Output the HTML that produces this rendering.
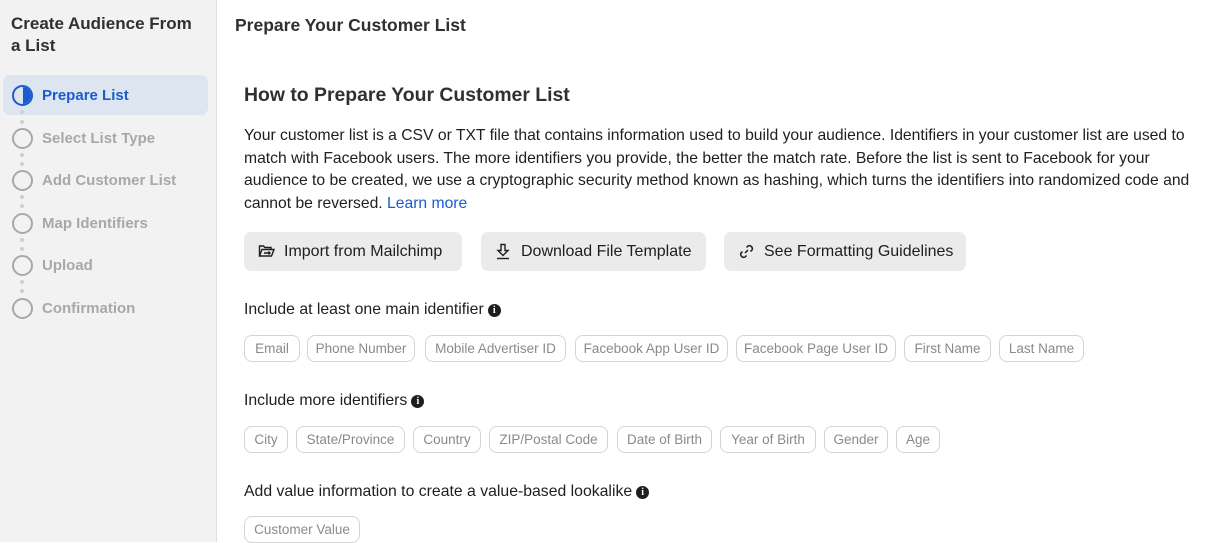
<!DOCTYPE html><html><head><style>
body{margin:0;width:1221px;height:542px;overflow:hidden;font-family:"Liberation Sans",Arial,sans-serif;background:#fff;color:#1c1e21;position:relative}
.sb{position:absolute;left:0;top:0;width:216px;height:542px;background:#f2f2f2;border-right:1px solid #e0e0e0}
.sb h1{position:absolute;left:11px;top:13px;margin:0;font-size:17px;line-height:22px;font-weight:bold;color:#303030;width:185px}
.act{position:absolute;left:3px;top:75px;width:205px;height:40px;background:#dde5f0;border-radius:7px}
.step{position:absolute;left:42px;font-size:15px;font-weight:bold;color:#a8a8a8}
.circ{position:absolute;left:12px;width:21px;height:21px;border:2px solid #a8a8a8;border-radius:50%;box-sizing:border-box}
.dot{position:absolute;left:20px;width:4px;height:4px;border-radius:50%;background:#d0d0d0}
.t{position:absolute;white-space:nowrap}
.btn{position:absolute;top:232px;height:39px;background:#ebebeb;border-radius:7px;font-size:16px;line-height:39px;color:#1c1e21;box-sizing:border-box;padding-left:40px}
.btn svg{position:absolute;left:14px;top:11px}
.chip{position:absolute;height:27px;border:1px solid #d4d4d4;border-radius:8px;font-size:13.5px;line-height:25px;color:#8a8a8a;box-sizing:border-box;text-align:center}
.i{display:inline-block;width:13px;height:13px;border-radius:50%;background:#1c1e21;color:#fff;font-size:10px;line-height:13px;text-align:center;font-weight:bold;font-family:"Liberation Serif",serif;vertical-align:1px;margin-left:4px}
</style></head><body>
<div class="sb">
<h1>Create Audience From a List</h1>
<div class="act"></div>
<div style="position:absolute;left:12px;top:85px;width:21px;height:21px;border:2px solid #1a5ccf;border-radius:50%;box-sizing:border-box;overflow:hidden"><div style="position:absolute;left:8.5px;top:0;width:10px;height:17px;background:#1a5ccf"></div></div>
<div class="step" style="top:87px;color:#1a5ccf">Prepare List</div>
<div class="dot" style="top:110px"></div><div class="dot" style="top:120px"></div>
<div class="circ" style="top:128px"></div><div class="step" style="top:130px">Select List Type</div>
<div class="dot" style="top:153px"></div><div class="dot" style="top:162px"></div>
<div class="circ" style="top:170px"></div><div class="step" style="top:172px">Add Customer List</div>
<div class="dot" style="top:195px"></div><div class="dot" style="top:204px"></div>
<div class="circ" style="top:213px"></div><div class="step" style="top:215px">Map Identifiers</div>
<div class="dot" style="top:238px"></div><div class="dot" style="top:247px"></div>
<div class="circ" style="top:255px"></div><div class="step" style="top:257px">Upload</div>
<div class="dot" style="top:280px"></div><div class="dot" style="top:289px"></div>
<div class="circ" style="top:298px"></div><div class="step" style="top:300px">Confirmation</div>
</div>
<div class="t" style="left:235px;top:15px;font-size:17.5px;font-weight:bold;color:#303030">Prepare Your Customer List</div>
<div class="t" style="left:244px;top:84px;font-size:19.4px;font-weight:bold;color:#303030">How to Prepare Your Customer List</div>
<div style="position:absolute;left:244px;top:125px;white-space:nowrap;font-size:15.7px;line-height:22.5px;color:#1c1e21">Your customer list is a CSV or TXT file that contains information used to build your audience. Identifiers in your customer list are used to<br>match with Facebook users. The more identifiers you provide, the better the match rate. Before the list is sent to Facebook for your<br>audience to be created, we use a cryptographic security method known as hashing, which turns the identifiers into randomized code and<br>cannot be reversed. <span style="color:#1a5ccf">Learn more</span></div>
<div class="btn" style="left:244px;width:218px"><svg width="17" height="16" viewBox="0 0 17 16" fill="none" stroke="#1c1e21" stroke-width="1.4"><path d="M1.5 13V3h4l1.5 1.5h6v2"/><path d="M1.5 13l2.5-6.5h12l-2.5 6.5z"/><path d="M6 10h6m-1.5-1.5L12 10l-1.5 1.5"/></svg>Import from Mailchimp</div>
<div class="btn" style="left:481px;width:225px"><svg width="16" height="17" viewBox="0 0 16 17" fill="none" stroke="#1c1e21" stroke-width="1.4"><path d="M6 1.5h4v6h3l-5 5-5-5h3z"/><path d="M2 15.5h12"/></svg>Download File Template</div>
<div class="btn" style="left:724px;width:242px"><svg width="17" height="17" viewBox="0 0 17 17" fill="none" stroke="#1c1e21" stroke-width="1.5"><path d="M7 10l3-3"/><path d="M8.5 4.5l1.5-1.5a3 3 0 0 1 4 4l-1.5 1.5"/><path d="M8.5 12.5l-1.5 1.5a3 3 0 0 1-4-4l1.5-1.5"/></svg>See Formatting Guidelines</div>
<div class="t" style="left:244px;top:301px;font-size:15.8px">Include at least one main identifier<span class="i">i</span></div>
<div class="chip" style="top:335px;left:244px;width:56px">Email</div>
<div class="chip" style="top:335px;left:307px;width:108px">Phone Number</div>
<div class="chip" style="top:335px;left:425px;width:141px">Mobile Advertiser ID</div>
<div class="chip" style="top:335px;left:575px;width:153px">Facebook App User ID</div>
<div class="chip" style="top:335px;left:736px;width:160px">Facebook Page User ID</div>
<div class="chip" style="top:335px;left:904px;width:87px">First Name</div>
<div class="chip" style="top:335px;left:999px;width:85px">Last Name</div>
<div class="t" style="left:244px;top:392px;font-size:15.8px">Include more identifiers<span class="i">i</span></div>
<div class="chip" style="top:426px;left:244px;width:44px">City</div>
<div class="chip" style="top:426px;left:296px;width:109px">State/Province</div>
<div class="chip" style="top:426px;left:413px;width:68px">Country</div>
<div class="chip" style="top:426px;left:489px;width:119px">ZIP/Postal Code</div>
<div class="chip" style="top:426px;left:617px;width:95px">Date of Birth</div>
<div class="chip" style="top:426px;left:720px;width:96px">Year of Birth</div>
<div class="chip" style="top:426px;left:824px;width:64px">Gender</div>
<div class="chip" style="top:426px;left:896px;width:44px">Age</div>
<div class="t" style="left:244px;top:483px;font-size:15.8px">Add value information to create a value-based lookalike<span class="i">i</span></div>
<div class="chip" style="top:516px;left:244px;width:116px">Customer Value</div>
</body></html>
